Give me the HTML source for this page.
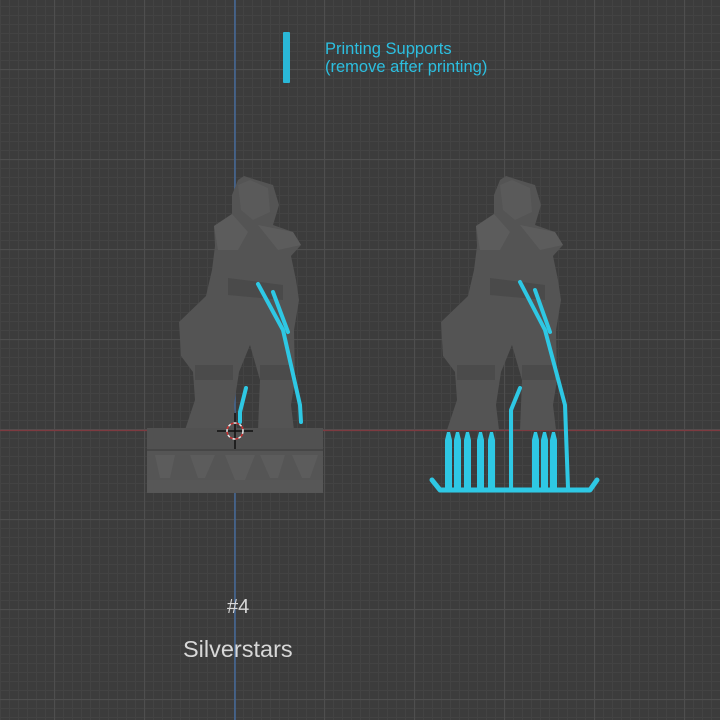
<!DOCTYPE html>
<html><head><meta charset="utf-8"><style>
html,body{margin:0;padding:0}
body{width:720px;height:720px;overflow:hidden;background:#3c3c3c;position:relative;font-family:"Liberation Sans",sans-serif}
.t{position:absolute;white-space:nowrap}
</style></head><body>
<svg width="720" height="720" style="position:absolute;left:0;top:0">
<defs>
<pattern id="mn" x="0" y="6" width="9" height="9" patternUnits="userSpaceOnUse"><path d="M0 0.5H9M0.5 0V9" stroke="#434343" stroke-width="1"/></pattern>
<pattern id="mj" x="54" y="69" width="90" height="90" patternUnits="userSpaceOnUse"><path d="M0 0.5H90M0.5 0V90" stroke="#4e4e4e" stroke-width="1.2"/></pattern>
<g id="fig">
<path d="M500,180 L506,176 L512,178 L535,185 L541,205 L535,225 L555,232 L563,245 L553,256 L558,280 L561,300 L556,330 L557,380 L553,405 L556,430 L520,430 L522,380 L512,345 L501,372 L496,405 L499,430 L447,430 L457,400 L455,372 L443,356 L441,322 L468,296 L474,270 L477,246 L476,226 L494,214 L494,195 Z" fill="#545454"/>
<path d="M476,226 L494,214 L510,232 L500,250 L480,250 Z" fill="#5c5c5c"/>
<path d="M520,225 L555,232 L563,245 L540,250 Z" fill="#5c5c5c"/>
<path d="M490,278 L545,285 L545,300 L490,295 Z" fill="#4a4a4a"/>
<path d="M457,365 L495,365 L495,380 L457,380 Z M522,365 L555,365 L555,380 L522,380 Z" fill="#4b4b4b"/>
<path d="M500,185 L512,180 L530,188 L532,212 L515,220 L503,210 Z" fill="#5a5a5a"/>
</g>
</defs>
<rect width="720" height="720" fill="url(#mn)"/>
<rect width="720" height="720" fill="url(#mj)"/>
<line x1="0" y1="430.5" x2="720" y2="430.5" stroke="#7e3a40" stroke-width="1.2"/>
<line x1="235" y1="0" x2="235" y2="720" stroke="#44699a" stroke-width="1.5"/>
<use href="#fig" transform="translate(-262,0)"/>
<rect x="147" y="428" width="176" height="65" rx="2" fill="#555"/>
<rect x="147" y="428" width="176" height="22" fill="#515151"/>
<rect x="147" y="449" width="176" height="2" fill="#464646"/>
<g fill="#5c5c5c">
<path d="M155,455 L175,455 L170,478 L160,478Z M190,455 L215,455 L205,478 L198,478Z M225,455 L255,455 L245,480 L235,480Z M260,455 L285,455 L278,478 L270,478Z M292,455 L318,455 L310,478 L302,478Z"/></g>
<rect x="147" y="480" width="176" height="13" fill="#575757"/>
<g stroke="#2ec8e4" stroke-width="4" fill="none" stroke-linecap="round" stroke-linejoin="round">
<path d="M258,284 L283,330 L300,405 L301,422"/>
<path d="M273,292 L288,332"/>
<path d="M246,388 L240,412 L240,422"/>
</g>
<g stroke="#111" stroke-width="1.5"><line x1="217" y1="431" x2="253" y2="431"/><line x1="235" y1="413" x2="235" y2="449"/></g>
<circle cx="235" cy="431" r="8" fill="none" stroke="#e8e8e8" stroke-width="1.5" stroke-dasharray="3 3"/>
<circle cx="235" cy="431" r="8" fill="none" stroke="#d03030" stroke-width="1.5" stroke-dasharray="3 3" stroke-dashoffset="3"/>
<use href="#fig"/>
<g stroke="#2ec8e4" fill="none" stroke-linecap="round" stroke-linejoin="round">
<path d="M432,480 L440,490 L590,490 L597,480" stroke-width="5"/>
<path d="M520,282 L545,330 L565,405 L568,488" stroke-width="4"/>
<path d="M535,290 L550,332" stroke-width="4"/>
<path d="M520,388 L511,410 L511,488" stroke-width="4"/>
</g>
<g fill="#2ec8e4">
<path d="M445,440 L447,432 L450,432 L452,440 L452,488 L445,488Z"/>
<path d="M454,440 L456,432 L459,432 L461,440 L461,488 L454,488Z"/>
<path d="M464,440 L466,432 L469,432 L471,440 L471,488 L464,488Z"/>
<path d="M477,440 L479,432 L482,432 L484,440 L484,488 L477,488Z"/>
<path d="M488,440 L490,432 L493,432 L495,440 L495,488 L488,488Z"/>
<path d="M532,440 L534,432 L537,432 L539,440 L539,488 L532,488Z"/>
<path d="M541,440 L543,432 L546,432 L548,440 L548,488 L541,488Z"/>
<path d="M550,440 L552,432 L555,432 L557,440 L557,488 L550,488Z"/>
</g>
<rect x="283" y="32" width="7" height="51" rx="1" fill="#2ab8d8"/>
</svg>
<div class="t" style="left:325px;top:40px;font-size:16.5px;line-height:18px;color:#2cbfe0">Printing Supports<br>(remove after printing)</div>
<div class="t" style="left:227px;top:596px;font-size:20px;color:#d8d8d8">#4</div>
<div class="t" style="left:183px;top:636px;font-size:23.5px;color:#d8d8d8">Silverstars</div>
</body></html>
